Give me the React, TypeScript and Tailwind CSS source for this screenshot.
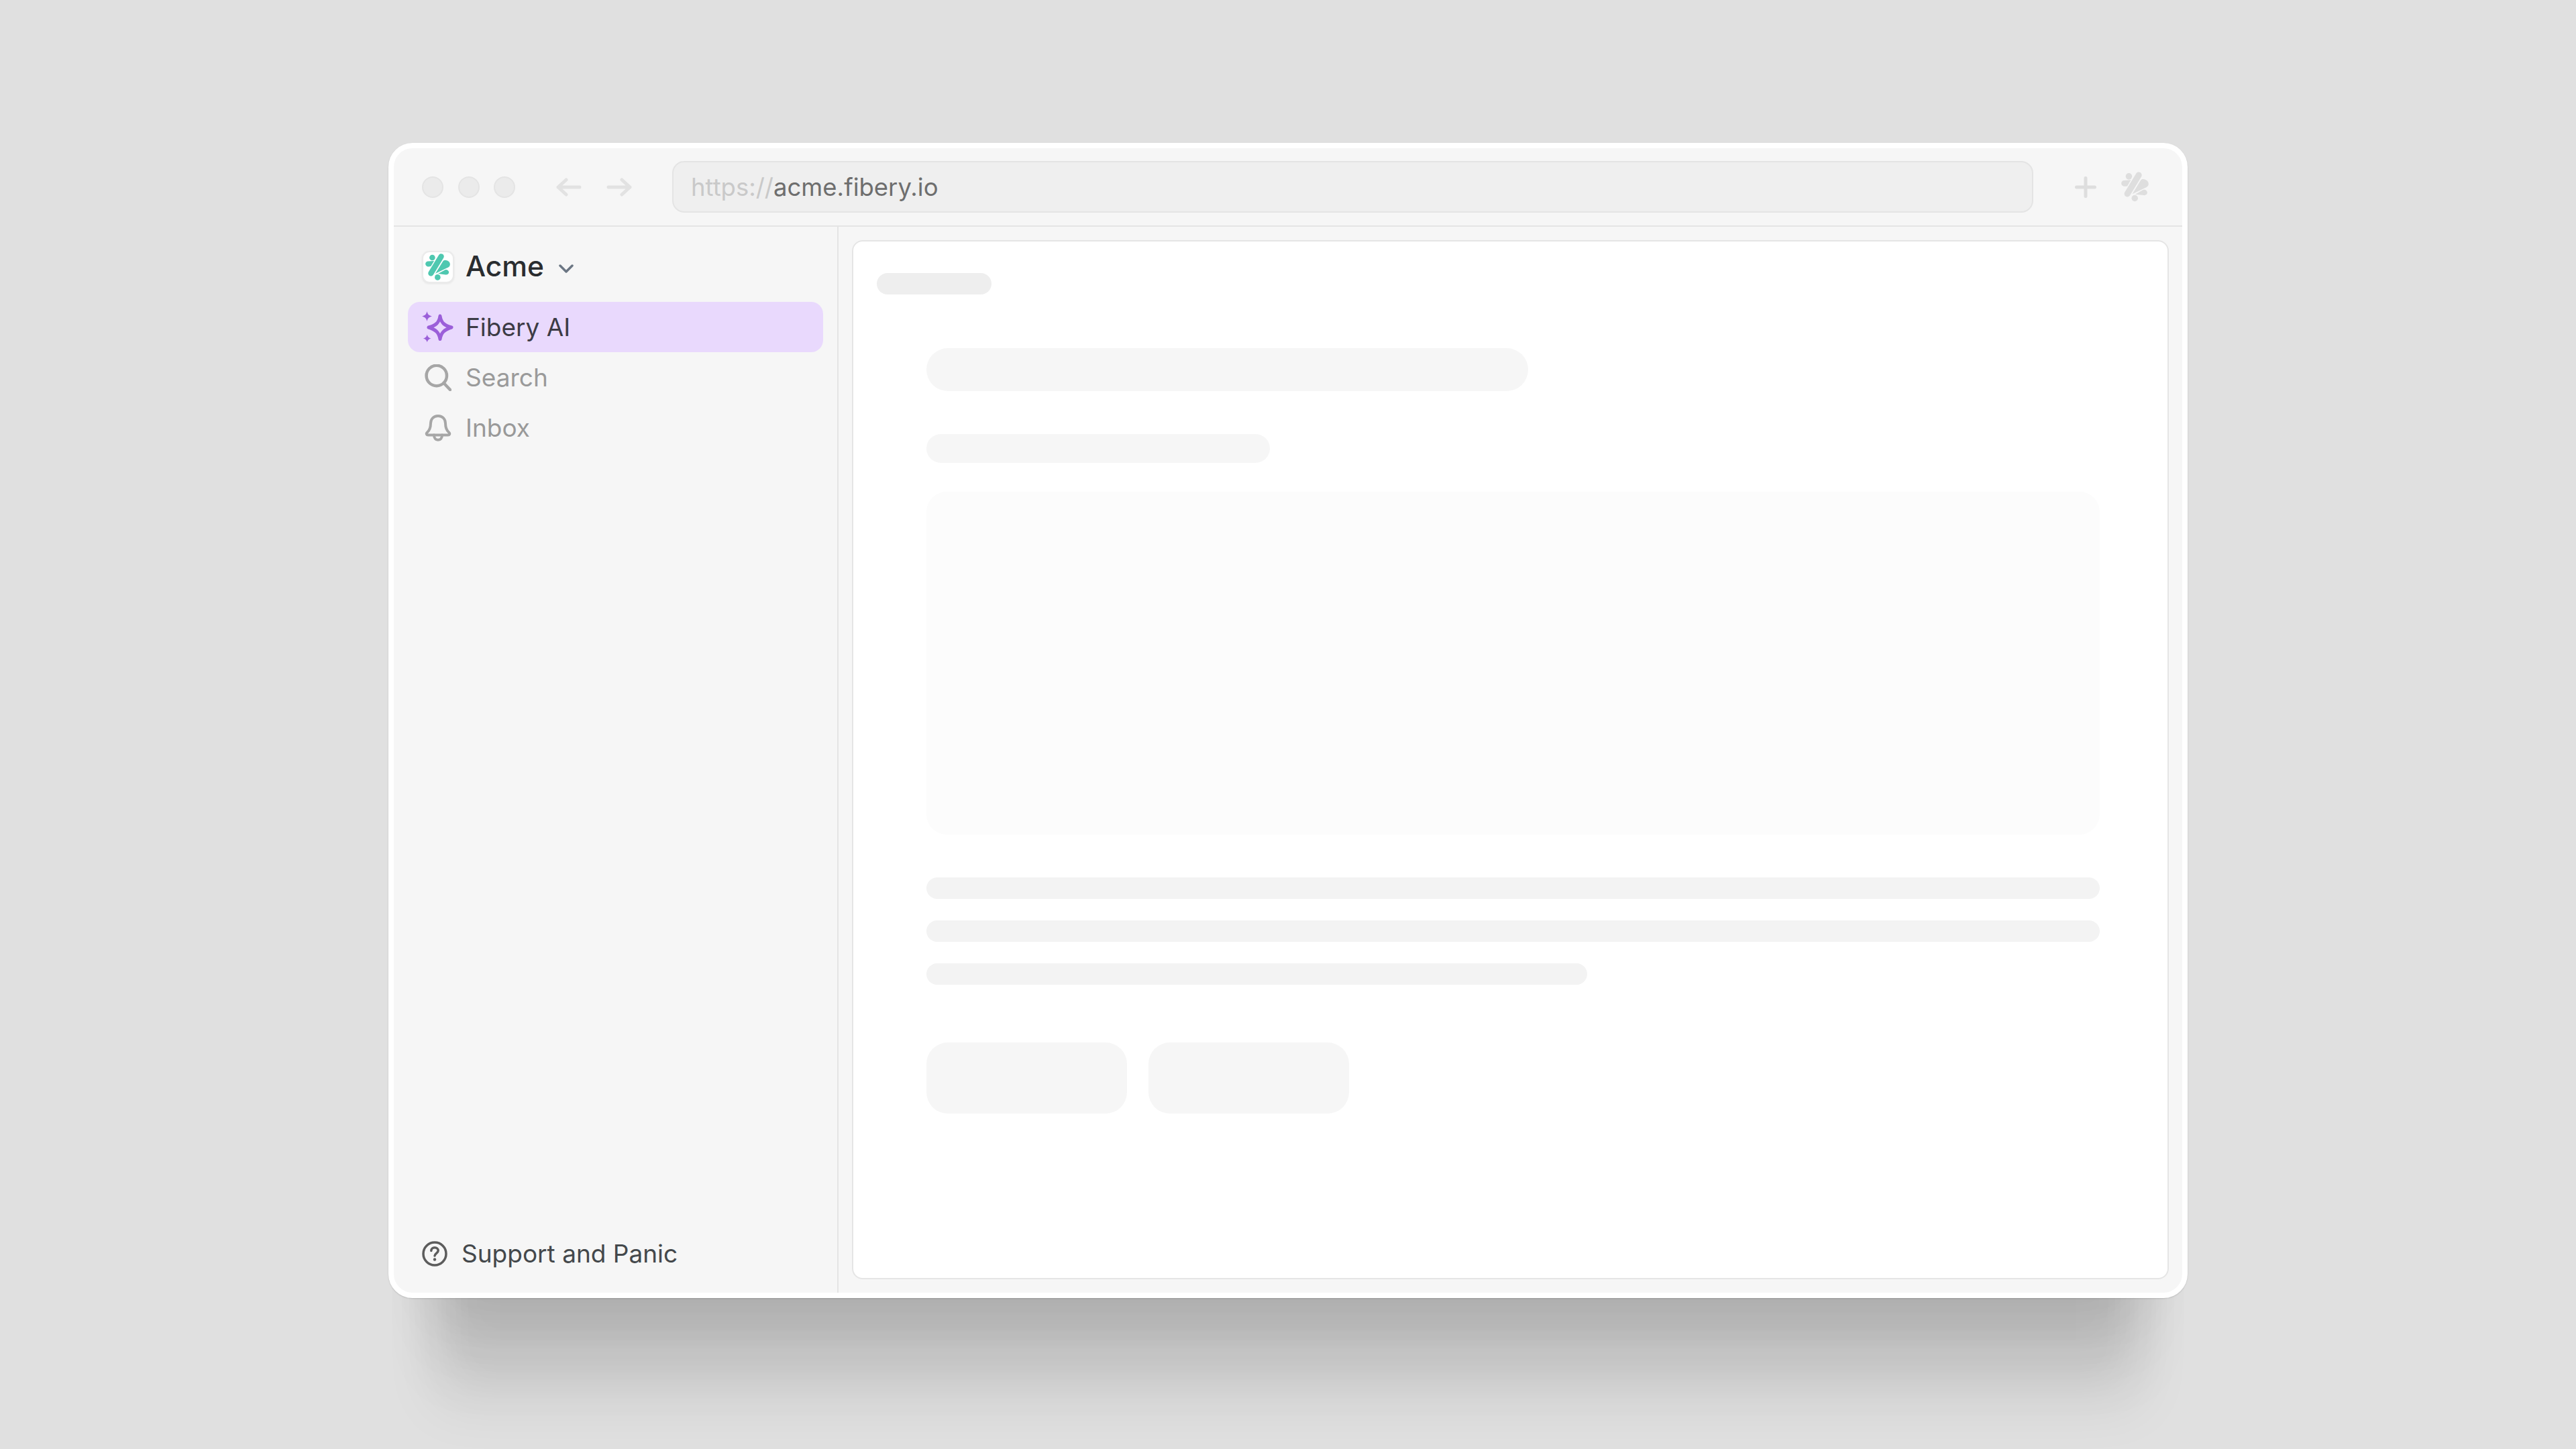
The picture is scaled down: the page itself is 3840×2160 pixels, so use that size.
const FONT = "font-['Inter','Liberation_Sans',sans-serif]";

function FiberyMark({ className }: { className: string }) {
  return (
    <svg viewBox="30 20 120 130" className={`shrink-0 ${className}`} fill="currentColor">
      <line x1="58" y1="112" x2="104" y2="36" stroke="currentColor" strokeWidth="25" strokeLinecap="round" />
      <circle cx="64" cy="41" r="13" />
      <path d="M72 56L44 58C33 59 30 72 37 78C42 83 50 82 58 80Z" />
      <path d="M78 113L113 56C119 50 129 52 137 58C147 66 146 80 136 85Z" />
      <path d="M90 114L122 96C130 93 139 100 139 107C139 114 132 119 124 118Z" />
      <circle cx="88" cy="130" r="13" />
    </svg>
  );
}

function ArrowBack({ flip }: { flip?: boolean }) {
  return (
    <svg viewBox="0 0 38 28" className={`h-[28px] w-[38px] text-[#e2e2e2] ${flip ? "-scale-x-100" : ""}`} fill="none" stroke="currentColor" strokeWidth="5" strokeLinecap="round" strokeLinejoin="round">
      <path d="M3 14H35M15 3L3 14L15 25" />
    </svg>
  );
}

function Sparkle() {
  return (
    <svg viewBox="0 0 48 48" className="h-[48px] w-[48px] text-[#9b5fd9]" fill="none">
      <path d="M27 7C28.500 17 33 21 44 24C33 27.500 28.500 32 27 41.500C25.500 32 21 27.500 10 24C21 21 25.500 17 27 7Z" stroke="currentColor" strokeWidth="5" strokeLinejoin="round" />
      <path d="M7.500 0C8.500 4.500 10 6 15 7.500C10 9 8.500 10.500 7.500 15C6.500 10.500 5 9 0 7.500C5 6 6.500 4.500 7.500 0Z" fill="currentColor" />
      <path d="M7.700 34.700C8.500 38 10 39.500 13.500 40.500C10 41.500 8.500 43 7.700 46.300C6.900 43 5.400 41.500 1.900 40.500C5.400 39.500 6.900 38 7.700 34.700Z" fill="currentColor" />
    </svg>
  );
}

function SearchIcon() {
  return (
    <svg viewBox="0 0 40 40" className="h-[40px] w-[40px] text-[#a6a6a6]" fill="none" stroke="currentColor" strokeWidth="4.500" strokeLinecap="round">
      <circle cx="17.800" cy="17" r="15.200" />
      <path d="M28.500 28L38 38" />
    </svg>
  );
}

function BellIcon() {
  return (
    <svg viewBox="0 0 40 40" className="h-[40px] w-[40px] text-[#a6a6a6]" fill="none" stroke="currentColor" strokeWidth="4" strokeLinecap="round" strokeLinejoin="round">
      <path d="M20 2C13 2 9 7 9 13C9 19 8 23 3.500 27C2 28.500 3 30.500 5 30.500H35C37 30.500 38 28.500 36.500 27C32 23 31 19 31 13C31 7 27 2 20 2Z" />
      <path d="M14 30.500C14 35 16.500 37.800 20 37.800C23.500 37.800 26 35 26 30.500" />
    </svg>
  );
}

function HelpIcon() {
  return (
    <svg viewBox="0 0 38 38" className="h-[38px] w-[38px] shrink-0 text-[#5c5c5c]" fill="none" stroke="currentColor" strokeWidth="3.500" strokeLinecap="round" strokeLinejoin="round">
      <circle cx="19" cy="19" r="17" />
      <path d="M13.800 14.500C13.800 11.500 16 9.800 19 9.800C22 9.800 24.200 11.700 24.200 14.300C24.200 17.800 19.200 18.300 19 22" />
      <circle cx="19" cy="27.500" r="2.200" fill="currentColor" stroke="none" />
    </svg>
  );
}

function NavItem({ icon, label, className }: { icon: React.ReactNode; label: string; className: string }) {
  return (
    <div className={`flex h-[75px] items-center gap-[17px] rounded-[18px] pl-[21px] text-[37px] ${className}`}>
      <span className="flex h-[48px] w-[48px] items-center justify-center">{icon}</span>
      {label}
    </div>
  );
}

export default function App() {
  return (
    <div className={`flex h-[2160px] w-[3840px] justify-center overflow-hidden bg-[#e0e0e0] pt-[213px] ${FONT}`}>
      <div className="flex h-[1722px] w-[2682px] flex-col rounded-[36px] border-[8px] border-white bg-[#f6f6f6] shadow-[0_1px_2px_rgba(0,0,0,0.15),0_80px_80px_-70px_rgba(0,0,0,0.065),0_130px_80px_-70px_rgba(0,0,0,0.065),0_180px_80px_-70px_rgba(0,0,0,0.065),0_230px_80px_-70px_rgba(0,0,0,0.065)]">
        <div className="flex h-[117px] shrink-0 items-center border-b-2 border-[#e4e4e4] pl-[42px] pr-[48px]">
          <div className="flex gap-[21.5px]">
            <span className="h-[32px] w-[32px] rounded-full border-2 border-[#e4e4e4] bg-[#ebebeb]" />
            <span className="h-[32px] w-[32px] rounded-full border-2 border-[#e4e4e4] bg-[#ebebeb]" />
            <span className="h-[32px] w-[32px] rounded-full border-2 border-[#e4e4e4] bg-[#ebebeb]" />
          </div>
          <div className="ml-[61px] flex gap-[37px]">
            <ArrowBack />
            <ArrowBack flip />
          </div>
          <div className="ml-[60px] flex h-[77px] flex-1 items-center rounded-[18px] border-2 border-[#e4e4e4] bg-[#efefef] pl-[26px] pt-[2px] text-[36.5px]">
            <span className="text-[#c9c9c9]">https://</span>
            <span className="text-[#6e6e6e]">acme.fibery.io</span>
          </div>
          <svg viewBox="0 0 32 32" className="ml-[62px] h-[32px] w-[32px] text-[#dedede]" fill="none" stroke="currentColor" strokeWidth="5" strokeLinecap="round">
            <path d="M16 2.500V29.500M2.500 16H29.500" />
          </svg>
          <FiberyMark className="ml-[36px] h-[48px] w-[44px] text-[#dedede]" />
        </div>

        <div className="flex min-h-0 flex-1">
          <aside className="flex w-[663px] shrink-0 flex-col border-r-2 border-[#e4e4e4] pb-[39px]">
            <div className="mt-[36px] flex items-center pl-[42px]">
              <span className="flex h-[48px] w-[48px] items-center justify-center rounded-[11px] border-2 border-[#ebebeb] bg-white shadow-[0_1px_3px_rgba(0,0,0,0.08)]">
                <FiberyMark className="h-[43px] w-[40px] text-[#4fc8b0]" />
              </span>
              <span className="ml-[17px] pb-[2px] text-[42.5px] font-medium leading-none text-[#2a2d30]">Acme</span>
              <svg viewBox="0 0 22 13" className="ml-[22px] mt-[4px] h-[13px] w-[22px] text-[#6b7683]" fill="none" stroke="currentColor" strokeWidth="3.500" strokeLinecap="round" strokeLinejoin="round">
                <path d="M2 2L11 11L20 2" />
              </svg>
            </div>
            <nav className="mt-[28px] flex flex-col px-[21px]">
              <NavItem icon={<Sparkle />} label="Fibery AI" className="bg-[#e9d9fd] text-[#3c3b45]" />
              <NavItem icon={<SearchIcon />} label="Search" className="text-[#9a9a9a]" />
              <NavItem icon={<BellIcon />} label="Inbox" className="text-[#999999]" />
            </nav>
            <div className="mt-auto flex items-center gap-[21px] pl-[42px] text-[37px] leading-[38px] text-[#44484b]">
              <HelpIcon />
              Support and Panic
            </div>
          </aside>

          <main className="m-[20px] flex-1 rounded-[16px] border-2 border-[#e5e5e5] bg-white pl-[35px] pr-[101px] pt-[47px]">
            <div className="h-[32px] w-[171px] rounded-full bg-[#eeeeee]" />
            <div className="ml-[74px] mt-[80px]">
              <div className="h-[64px] w-[897px] rounded-full bg-[#f6f6f6]" />
              <div className="mt-[64px] h-[43px] w-[512px] rounded-full bg-[#f6f6f6]" />
              <div className="mt-[43px] h-[511px] rounded-[30px] bg-[#fcfcfc]" />
              <div className="mt-[64px] flex flex-col gap-[32px]">
                <div className="h-[32px] rounded-full bg-[#f3f3f3]" />
                <div className="h-[32px] rounded-full bg-[#f3f3f3]" />
                <div className="h-[32px] w-[985px] rounded-full bg-[#f3f3f3]" />
              </div>
              <div className="mt-[86px] flex gap-[32px]">
                <div className="h-[106px] w-[299px] rounded-[32px] bg-[#f6f6f6]" />
                <div className="h-[106px] w-[299px] rounded-[32px] bg-[#f6f6f6]" />
              </div>
            </div>
          </main>
        </div>
      </div>
    </div>
  );
}
